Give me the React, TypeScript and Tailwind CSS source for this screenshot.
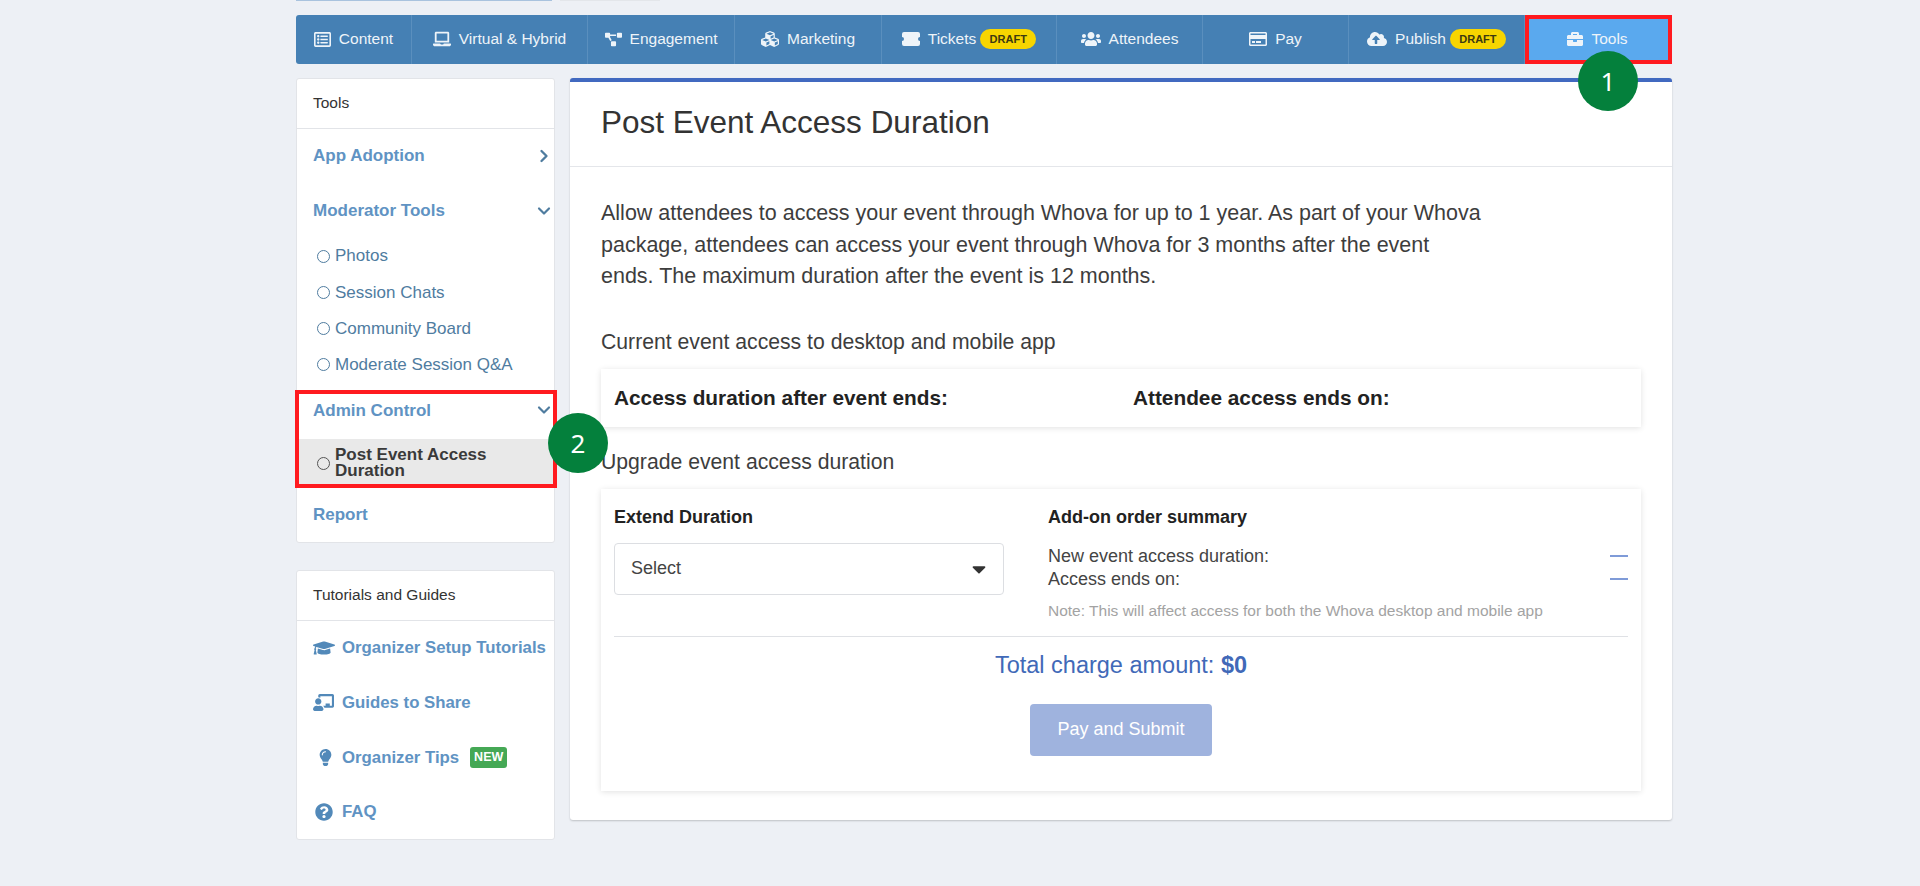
import React from "react";
import { ChevronDown, ChevronRight } from "lucide-react";
import {
  FaRegListAlt, FaLaptop, FaProjectDiagram, FaCubes, FaUsers, FaRegCreditCard,
  FaCloudUploadAlt, FaBriefcase, FaGraduationCap, FaChalkboardTeacher, FaLightbulb, FaQuestionCircle, FaCaretDown,
} from "react-icons/fa";

const Draft = () => (
  <span className="ml-[4px] flex h-[20px] w-[56px] items-center justify-center rounded-full bg-[#f7d500] text-[11px] font-bold text-[#3d3a10]">DRAFT</span>
);

const SolidTicket = () => (
  <svg width="18" height="14" viewBox="0 0 18 14" fill="currentColor">
    <path d="M2 0h14a2 2 0 0 1 2 2v3a2 2 0 0 0 0 4v3a2 2 0 0 1-2 2H2a2 2 0 0 1-2-2V9a2 2 0 0 0 0-4V2a2 2 0 0 1 2-2z" />
  </svg>
);

const tabs = [
  { w: "w-[116px]", label: "Content", icon: <FaRegListAlt className="text-[17px]" /> },
  { w: "w-[176px]", label: "Virtual & Hybrid", icon: <FaLaptop className="text-[18px]" /> },
  { w: "w-[147px]", label: "Engagement", icon: <FaProjectDiagram className="text-[17px]" /> },
  { w: "w-[147px]", label: "Marketing", icon: <FaCubes className="text-[18px]" /> },
  { w: "w-[175px]", label: "Tickets", icon: <SolidTicket />, draft: true },
  { w: "w-[146px]", label: "Attendees", icon: <FaUsers className="text-[20px]" /> },
  { w: "w-[146px]", label: "Pay", icon: <FaRegCreditCard className="text-[18px]" /> },
  { w: "w-[176px]", label: "Publish", icon: <FaCloudUploadAlt className="text-[20px]" />, draft: true },
];

const SubItem = ({ label }: { label: string }) => (
  <div className="flex h-[36.2px] items-center pl-[20px] text-[17px] text-[#4f7c9f]">
    <span className="mr-[5px] h-[13px] w-[13px] rounded-full border-[1.5px] border-[#4f7c9f]" />
    {label}
  </div>
);

const GuideRow = ({ icon, label, badge, h }: { icon: React.ReactNode; label: string; badge?: boolean; h: string }) => (
  <div className={`flex items-center pl-[16px] text-[16.8px] font-bold text-[#6093c3] ${h}`}>
    <span className="flex w-[29px] justify-start text-[#5289b9]">{icon}</span>
    {label}
    {badge && (
      <span className="ml-[11px] flex h-[21px] w-[37px] items-center justify-center rounded-[3px] bg-[#45a855] text-[12.5px] font-bold text-white">NEW</span>
    )}
  </div>
);

export default function App() {
  return (
    <div className="relative h-[886px] overflow-hidden bg-[#edf0f5] font-['Liberation_Sans',Arial,sans-serif]">
      <div className="ml-[296px] w-[1376px]">
        <div className="flex h-[15px] items-start">
          <div className="h-px w-[256px] bg-[#a9c3de]" />
          <div className="ml-[8px] h-px w-[100px] bg-[#e3e6ea]" />
        </div>

        {/* Tab bar */}
        <div className="flex h-[49px] overflow-hidden rounded-l-[3px] bg-[#4580b4] pb-0 text-[15.5px] text-[#eef4f9]">
          {tabs.map((t) => (
            <div key={t.label} className={`flex items-center justify-center gap-[8px] border-r border-[#5a8fbe] pb-[1px] ${t.w}`}>
              {t.icon}
              <span className="flex items-center">
                {t.label}
                {t.draft && <Draft />}
              </span>
            </div>
          ))}
          <div className="flex w-[147px] items-center justify-center gap-[8px] bg-[#5aa9ee] pb-[1px] pr-[2px]">
            <FaBriefcase className="text-[16px]" />
            <span>Tools</span>
          </div>
        </div>

        <div className="mt-[14px] flex items-start gap-[15px]">
          {/* Sidebar */}
          <div className="w-[259px] shrink-0">
            <div className="h-[465px] rounded-[3px] border border-[#e2e4e8] bg-white">
              <div className="flex h-[50px] items-center border-b border-[#e2e4e8] pb-[1px] pl-[16px] text-[15.5px] text-[#333]">Tools</div>
              <div className="flex h-[54px] items-center justify-between pl-[16px] text-[17px] font-bold text-[#6093c3]">
                App Adoption
                <ChevronRight size={20} strokeWidth={2.8} className="text-[#4f7c9f]" />
              </div>
              <div className="flex h-[55px] items-center justify-between pl-[16px] text-[17px] font-bold text-[#6093c3]">
                Moderator Tools
                <ChevronDown size={20} strokeWidth={2.6} className="text-[#4f7c9f]" />
              </div>
              <SubItem label="Photos" />
              <SubItem label="Session Chats" />
              <SubItem label="Community Board" />
              <SubItem label="Moderate Session Q&A" />
              <div className="flex h-[46px] items-center justify-between pl-[16px] pt-[9px] text-[17px] font-bold text-[#6093c3]">
                Admin Control
                <ChevronDown size={20} strokeWidth={2.6} className="text-[#4f7c9f]" />
              </div>
              <div className="mt-[10px] flex h-[47px] items-center bg-[#e9e9e9] pl-[20px] pt-[2px] text-[17px] font-bold leading-[16px] text-[#3a3a3a]">
                <span className="mr-[5px] h-[13px] w-[13px] shrink-0 rounded-full border-[1.5px] border-[#555]" />
                <span>Post Event Access<br />Duration</span>
              </div>
              <div className="flex h-[58px] items-center pl-[16px] text-[17px] font-bold text-[#6093c3]">Report</div>
            </div>

            <div className="mt-[27px] h-[270px] rounded-[3px] border border-[#e2e4e8] bg-white">
              <div className="flex h-[50px] items-center border-b border-[#e2e4e8] pb-[1px] pl-[16px] text-[15.5px] text-[#333]">Tutorials and Guides</div>
              <GuideRow h="h-[54px]" icon={<FaGraduationCap className="text-[22px]" />} label="Organizer Setup Tutorials" />
              <GuideRow h="h-[55px]" icon={<FaChalkboardTeacher className="text-[21px]" />} label="Guides to Share" />
              <GuideRow h="h-[55px]" icon={<FaLightbulb className="ml-[4px] text-[17px]" />} label="Organizer Tips" badge />
              <GuideRow h="h-[54px]" icon={<FaQuestionCircle className="ml-[2px] text-[18px]" />} label="FAQ" />
            </div>
          </div>

          {/* Main panel */}
          <div className="h-[742px] w-[1102px] rounded-[3px] border-t-[4px] border-[#4169c0] bg-white shadow-[0_1px_2px_rgba(0,0,0,0.2)]">
            <div className="flex h-[85px] items-center border-b border-[#e4e6ea] pb-[3px] pl-[31px] text-[31.5px] text-[#333]">Post Event Access Duration</div>
            <div className="pl-[31px] pr-[31px]">
              <p className="mt-[31px] w-[900px] text-[21.5px] leading-[31.5px] text-[#3d3d3d]">
                Allow attendees to access your event through Whova for up to 1 year. As part of your Whova<br />
                package, attendees can access your event through Whova for 3 months after the event<br />
                ends. The maximum duration after the event is 12 months.
              </p>
              <p className="mt-[33px] text-[21.2px] leading-[31px] text-[#3d3d3d]">Current event access to desktop and mobile app</p>
              <div className="mt-[12px] flex h-[58px] items-center bg-white pl-[13px] text-[20.8px] font-bold text-[#222] shadow-[0_1px_6px_rgba(0,0,0,0.12)]">
                <span className="w-[519px]">Access duration after event ends:</span>
                <span>Attendee access ends on:</span>
              </div>
              <p className="mt-[19px] text-[21.2px] leading-[31px] text-[#3d3d3d]">Upgrade event access duration</p>
              <div className="mt-[12px] h-[302px] bg-white px-[13px] shadow-[0_1px_6px_rgba(0,0,0,0.12)]">
                <div className="flex h-[148px] border-b border-[#dfe1e5] pt-[17px]">
                  <div className="w-[434px]">
                    <div className="text-[18px] font-bold leading-[22px] text-[#222]">Extend Duration</div>
                    <div className="mt-[15px] flex h-[52px] w-[390px] items-center justify-between rounded-[4px] border border-[#dcdee2] pl-[16px] pr-[13px] text-[18px] text-[#444]">
                      Select
                      <FaCaretDown className="text-[22px] text-[#333]" />
                    </div>
                  </div>
                  <div className="flex-1">
                    <div className="text-[18px] font-bold leading-[22px] text-[#222]">Add-on order summary</div>
                    <div className="mt-[17px] flex h-[23px] items-center justify-between text-[18px] text-[#444]">
                      New event access duration:
                      <span className="h-[2px] w-[18px] bg-[#7f9bd8]" />
                    </div>
                    <div className="flex h-[23px] items-center justify-between text-[18px] text-[#444]">
                      Access ends on:
                      <span className="h-[2px] w-[18px] bg-[#7f9bd8]" />
                    </div>
                    <div className="mt-[10px] text-[15.5px] leading-[20px] text-[#a3a3a3]">Note: This will affect access for both the Whova desktop and mobile app</div>
                  </div>
                </div>
                <div className="mt-[12px] text-center text-[23.5px] leading-[32px] text-[#4169b8]">
                  Total charge amount: <b>$0</b>
                </div>
                <div className="mt-[23px] flex justify-center">
                  <div className="flex h-[52px] w-[182px] items-center justify-center rounded-[4px] bg-[#9fb3de] text-[18px] text-white">Pay and Submit</div>
                </div>
              </div>
            </div>
          </div>
        </div>
      </div>

      {/* Annotations */}
      <div className="absolute left-[1525px] top-[15px] h-[49px] w-[147px] border-[4px] border-[#ff1a1f]" />
      <div className="absolute left-[295px] top-[390px] h-[98px] w-[262px] border-[4px] border-[#ff1a1f]" />
      <div className="absolute left-[1578px] top-[51px] flex h-[60px] w-[60px] items-center justify-center rounded-full bg-[#04803c] font-['Noto_Sans',sans-serif] text-[26px] text-white">1</div>
      <div className="absolute left-[548px] top-[413px] flex h-[60px] w-[60px] items-center justify-center rounded-full bg-[#04803c] font-['Noto_Sans',sans-serif] text-[26px] text-white">2</div>
    </div>
  );
}
